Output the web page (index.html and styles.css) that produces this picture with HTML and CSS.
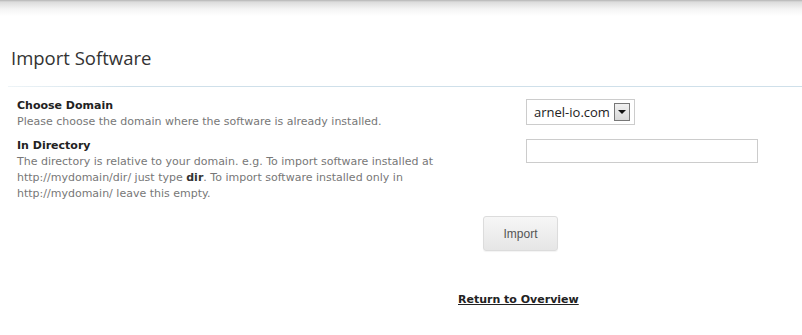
FILE: index.html
```html
<!DOCTYPE html>
<html lang="en">
<head>
  <meta charset="UTF-8">
  <title>Import Software</title>
  <link rel="stylesheet" href="styles.css">
</head>
<body>
  <div class="shade"></div>

  <div class="page">
    <h1>Import Software</h1>
    <div class="rule"></div>

    <div class="form">
      <div class="row">
        <div class="label">
          <strong>Choose Domain</strong>
          <p class="hint">Please choose the domain where the software is already installed.</p>
        </div>
        <div class="field">
          <div class="select">
            <span>arnel-io.com</span>
            <span class="drop"></span>
          </div>
        </div>
      </div>

      <div class="row">
        <div class="label">
          <strong>In Directory</strong>
          <p class="hint">The directory is relative to your domain. e.g. To import software installed at http://mydomain/dir/ just type <b>dir</b>. To import software installed only in http://mydomain/ leave this empty.</p>
        </div>
        <div class="field">
          <input type="text" class="text">
        </div>
      </div>

      <div class="actions">
        <button class="btn">Import</button>
      </div>

      <div class="back">
        <a href="#">Return to Overview</a>
      </div>
    </div>
  </div>
</body>
</html>
```

FILE: styles.css
```css
body {
  margin: 0;
  font-family: "DejaVu Sans", Verdana, sans-serif;
  font-size: 11px;
  color: #222;
  background: #fff;
}

.shade {
  height: 16px;
  background: linear-gradient(#b4b4b4 0, #dcdcdc 2px, #f4f4f4 9px, #fff 16px);
}

.page {
  padding-left: 8px;
}

h1 {
  margin: 30px 0 0 3px;
  font-family: "Open Sans", sans-serif;
  font-weight: normal;
  font-size: 18.5px;
  line-height: 24px;
  color: #333;
}

.rule {
  margin-top: 16px;
  height: 1px;
  background: linear-gradient(to right, #eef4f7, #cfe0ea 15%, #cfe0ea);
}

.form {
  padding: 11px 0 0 9px;
}

.row {
  display: flex;
  margin-bottom: 8px;
}

.label {
  width: 509px;
  line-height: 16px;
}

.label strong {
  display: block;
}

.hint {
  margin: 0;
  color: #777;
  width: 440px;
}

.hint b {
  color: #333;
}

.field {
  padding-top: 1px;
}

.select {
  display: inline-flex;
  align-items: center;
  gap: 4px;
  height: 24px;
  padding: 0 4px 0 7px;
  border: 1px solid #ccc;
  font-family: "Open Sans", sans-serif;
  font-size: 13px;
  color: #222;
}

.drop {
  width: 14px;
  height: 16px;
  border: 1px solid #777;
  background: linear-gradient(#f0f0f0, #d8d8d8);
  position: relative;
}

.drop::after {
  content: "";
  position: absolute;
  left: 3px;
  top: 6px;
  border-left: 4px solid transparent;
  border-right: 4px solid transparent;
  border-top: 4px solid #111;
}

.text {
  width: 232px;
  height: 24px;
  margin: 0;
  padding: 0;
  border: 1px solid #ccc;
  box-sizing: border-box;
}

.actions {
  padding: 6px 0 0 466px;
}

.btn {
  width: 75px;
  height: 35px;
  border: 1px solid #dcdcdc;
  border-radius: 3px;
  background: linear-gradient(#f6f6f6, #e6e6e6);
  box-shadow: 0 1px 1px rgba(0, 0, 0, 0.05);
  font-family: "Liberation Sans", Arial, sans-serif;
  font-size: 12px;
  color: #555;
}

.back {
  padding: 42px 0 0 441px;
}

.back a {
  color: #222;
  font-weight: bold;
}
```
